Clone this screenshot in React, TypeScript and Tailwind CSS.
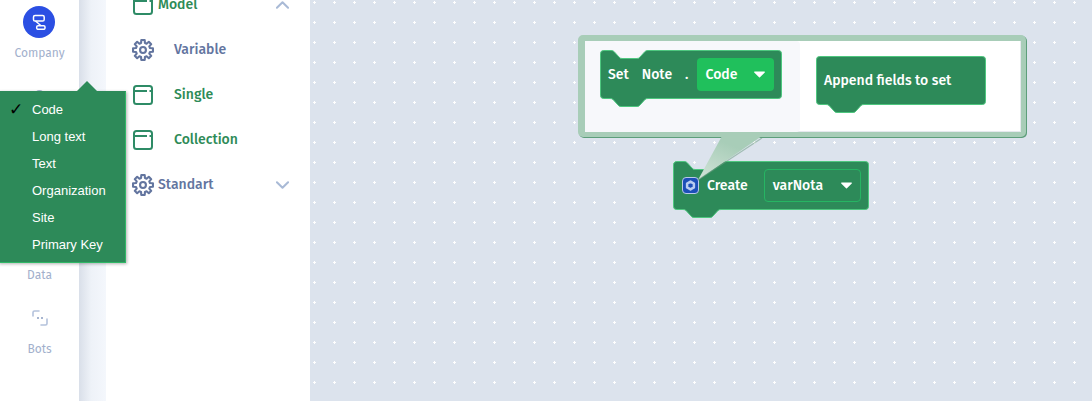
import React from "react";

const FONT = "font-['Fira_Sans','Noto_Sans','Open_Sans',sans-serif]";

/* 8-toothed cog outline, computed so that every tooth is identical */
function gearPath() {
  const pts: string[] = [];
  const teeth = 8;
  for (let i = 0; i < teeth; i++) {
    const c = (i * Math.PI * 2) / teeth - Math.PI / 2;
    const seg: [number, number][] = [
      [-0.27, 7.9],
      [-0.17, 11],
      [0.17, 11],
      [0.27, 7.9],
    ];
    seg.forEach(([d, r]) => {
      const x = 12 + r * Math.cos(c + d);
      const y = 12 + r * Math.sin(c + d);
      pts.push(`${x.toFixed(2)} ${y.toFixed(2)}`);
    });
  }
  return `M${pts.join("L")}z`;
}

function Gear({ className, sw = 2.3 }: { className: string; sw?: number }) {
  return (
    <svg viewBox="0 0 24 24" fill="none" stroke="currentColor" strokeWidth={sw} strokeLinecap="round" strokeLinejoin="round" className={className}>
      <path d={gearPath()} />
      <circle cx="12" cy="12" r="3.2" />
    </svg>
  );
}

function Win({ className }: { className: string }) {
  return (
    <svg viewBox="0 0 20 20" fill="none" stroke="currentColor" strokeWidth="2" className={className}>
      <rect x="1" y="1" width="18" height="18" rx="2.5" />
      <path d="M1 6h13M16.5 6h2.5" />
    </svg>
  );
}

function Caret({ className }: { className: string }) {
  return (
    <svg viewBox="0 0 10 6" className={className} fill="currentColor">
      <path d="M0.6 0.3h8.8a0.5 0.5 0 0 1 0.4 0.8L5.4 5.6a0.6 0.6 0 0 1-0.8 0L0.2 1.1a0.5 0.5 0 0 1 0.4-0.8z" />
    </svg>
  );
}

function Row({ icon, label, color, gap }: { icon: React.ReactNode; label: string; color: string; gap: string }) {
  return (
    <div className={`h-[45px] flex items-center ${gap}`}>
      {icon}
      <span className={`text-[14px] font-medium ${color}`}>{label}</span>
    </div>
  );
}

function blockPath(w: number, h: number, notch: boolean) {
  const r = 3.5;
  const a = r - 0.5;
  const top = notch ? `M${r} 0.5H11q2 0 3 1l5 5.5q1 1.5 3 1.5H37q2 0 3-1.5l5-5.5q1-1 3-1H${w - r}` : `M${r} 0.5H${w - r}`;
  return `${top}a${a} ${a} 0 0 1 ${a} ${a}V${h - r}a${a} ${a} 0 0 1-${a} ${a}H48q-2 0-3 1l-5 5.5q-1 1.5-3 1.5H21q-2 0-3-1.5l-5-5.5q-1-1-3-1H${r}a${a} ${a} 0 0 1-${a}-${a}V${r}a${a} ${a} 0 0 1 ${a}-${a}z`;
}

function BlockShape({ w, h, notch }: { w: number; h: number; notch: boolean }) {
  return (
    <svg width={w} height={h + 9} viewBox={`0 0 ${w} ${h + 9}`} className="absolute inset-0">
      <path d={blockPath(w, h, notch)} fill="#2d8a59" stroke="#4ec77f" strokeWidth="1" />
    </svg>
  );
}

export default function App() {
  return (
    <div className={`w-[1092px] h-[401px] overflow-hidden relative flex ${FONT}`}>
      {/* Icon rail */}
      <aside className="w-[79px] shrink-0 bg-white flex flex-col items-center">
        <div className="mt-[6px] mr-[1px] w-8 h-8 rounded-full bg-[#2b4fe3] flex items-center justify-center">
          <svg viewBox="0 0 16 16" fill="none" stroke="white" strokeWidth="1.5" strokeLinejoin="round" className="w-4 h-4">
            <rect x="2.5" y="1.5" width="10.7" height="5.5" rx="1.6" />
            <rect x="5.7" y="11.7" width="8.3" height="3.6" rx="1.3" />
            <path d="M4.5 7l5.5 4.7" />
          </svg>
        </div>
        <span className="mt-[7px] text-[12px] leading-[16px] text-[#a2b0cc]">Company</span>
        <span className="mt-[29px] w-[7px] h-[4px] rounded-t-[3px] bg-[#aab6cf]" />
        <span className="mt-[173px] text-[12px] leading-[16px] text-[#a2b0cc]">Data</span>
        <svg viewBox="0 0 18 18" fill="none" stroke="#b4c2dc" strokeWidth="1.6" strokeLinecap="round" className="mt-[26px] w-[18px] h-[18px]">
          <path d="M2 7V3.5A1.5 1.5 0 0 1 3.5 2H8" />
          <path d="M16 10v4.5a1.5 1.5 0 0 1-1.5 1.5H10" />
          <circle cx="7" cy="9" r="1" fill="#8a9cc0" stroke="none" />
          <circle cx="11" cy="9" r="1" fill="#8a9cc0" stroke="none" />
        </svg>
        <span className="mt-[14px] text-[12px] leading-[16px] text-[#a2b0cc]">Bots</span>
      </aside>

      {/* Shadow gutter */}
      <div className="w-[27px] shrink-0 bg-[linear-gradient(90deg,#d9dfe9_0%,#eef2f8_45%,#f4f7fc_100%)]" />

      {/* Tree panel */}
      <nav className="w-[204px] shrink-0 bg-white pl-[27px] pr-[20px] -mt-[18px] h-[419px]">
        <div className="h-[45px] flex items-center gap-[5px] relative text-[#2e8b57]">
          <Win className="w-5 h-5 text-[#2e8b66]" />
          <span className="text-[14px] font-medium">Model</span>
          <svg viewBox="0 0 14 8" fill="none" stroke="#a9bad6" strokeWidth="2.2" strokeLinecap="round" strokeLinejoin="round" className="ml-auto mr-[1px] w-[13px] h-2">
            <path d="M1 7l6-6 6 6" />
          </svg>
        </div>
        <Row icon={<Gear className="w-[22px] h-[22px] -mx-[1px] text-[#63759f]" />} label="Variable" color="text-[#63759f]" gap="gap-[21px]" />
        <Row icon={<Win className="w-5 h-5 text-[#2e8b66]" />} label="Single" color="text-[#2e8b57]" gap="gap-[21px]" />
        <Row icon={<Win className="w-5 h-5 text-[#2e8b66]" />} label="Collection" color="text-[#2e8b57]" gap="gap-[21px]" />
        <div className="h-[45px] flex items-center gap-[5px] text-[#63759f]">
          <Gear className="w-[22px] h-[22px] -mx-[1px]" />
          <span className="text-[14px] font-medium">Standart</span>
          <svg viewBox="0 0 14 8" fill="none" stroke="#a9bad6" strokeWidth="2.2" strokeLinecap="round" strokeLinejoin="round" className="ml-auto mr-[1px] w-[13px] h-2">
            <path d="M1 1l6 6 6-6" />
          </svg>
        </div>
      </nav>

      {/* Canvas */}
      <main className="flex-1 relative bg-[#dce3ed] bg-[radial-gradient(circle_at_10.5px_10.5px,#ffffff_1.2px,transparent_1.2px)] bg-[size:20px_20px] bg-[position:-6px_-8px]">
        {/* Comment bubble */}
        <div className="absolute left-[268px] top-[35px] w-[448px] h-[102px] rounded-[5px] border-t-[6px] border-l-[7px] border-r-[5px] border-b-[5px] border-[#a8cdb8] shadow-[1px_1px_0_0_#5d9e7b,inset_-1px_-1px_0_0_#e6e9ee] bg-white">
          <div className="w-[215px] h-full bg-[#f7f8fb] rounded-r-[4px]" />
        </div>

        {/* Set Note . Code */}
        <div className="absolute left-[290px] top-[50px] w-[182px] h-[58px] text-white text-[14px] font-medium">
          <BlockShape w={182} h={49} notch />
          <div className="relative flex items-center h-[49px] pl-[8px]">
            <span>Set</span>
            <span className="ml-[13px]">Note</span>
            <span className="ml-[13px]">.</span>
            <div className="ml-[9px] w-[77px] h-[33px] rounded-[4px] bg-[#20c05c] flex items-center pl-[8px] pr-[9px] justify-between">
              <span>Code</span>
              <Caret className="w-[11px] h-[7px] text-white" />
            </div>
          </div>
        </div>

        {/* Append fields */}
        <div className="absolute left-[506px] top-[56px] w-[170px] h-[58px] text-white text-[14px] font-medium">
          <BlockShape w={170} h={49} notch={false} />
          <div className="relative flex items-center h-[49px] pl-[8px]">
            <span>Append fields to set</span>
          </div>
        </div>

        {/* Create varNota */}
        <div className="absolute left-[363px] top-[161px] w-[196px] h-[58px] text-white text-[14px] font-medium">
          <BlockShape w={196} h={49} notch />
          <div className="relative flex items-center h-[49px] pl-[9px]">
            <span className="w-[17px] h-[17px] rounded-[4px] bg-[#1c4fb8] border border-[#b9c9e8] flex items-center justify-center">
              <svg viewBox="0 0 24 24" className="w-[11px] h-[11px] text-[#b8ccf0]" fill="none" stroke="currentColor" strokeWidth="5.5" strokeLinejoin="round">
                <path d="M12 3.5l7.4 4.25v8.5L12 20.5l-7.4-4.25v-8.5z" />
              </svg>
            </span>
            <span className="ml-[8px]">Create</span>
            <div className="ml-[16px] w-[97px] h-[33px] rounded-[4px] border border-[#26b563] flex items-center pl-[8px] pr-[8px] justify-between">
              <span>varNota</span>
              <Caret className="w-[11px] h-[7px] text-white" />
            </div>
          </div>
        </div>

        {/* Bubble tail, over the block it points at */}
        <svg width="72" height="48" viewBox="0 0 72 48" className="absolute left-[382px] top-[136px]">
          <defs>
            <linearGradient id="tail" x1="0.05" y1="0.95" x2="0.5" y2="0.2">
              <stop offset="0" stopColor="#cfe2d6" />
              <stop offset="1" stopColor="#a8cdb8" />
            </linearGradient>
          </defs>
          <path d="M6 44L30 0h40z" fill="url(#tail)" />
          <path d="M70 2L6 44" stroke="#6f9c83" strokeOpacity="0.55" strokeWidth="1.2" fill="none" />
        </svg>
      </main>

      {/* Dropdown menu */}
      <div className="absolute left-[-2px] top-[91px] w-[128px] h-[172px] bg-[#2d8a59] border border-[#2fb866] border-t-[#2d8a59] shadow-[1px_1px_3px_rgba(0,0,0,0.3)] font-['Liberation_Sans',Arial,sans-serif] text-[13px] text-white pt-[4px]">
        <div className="absolute left-[77px] -top-[11px] w-0 h-0 border-l-[11px] border-r-[11px] border-b-[11px] border-l-transparent border-r-transparent border-b-[#2d8a59]" />
        {[
          ["Code", true],
          ["Long text", false],
          ["Text", false],
          ["Organization", false],
          ["Site", false],
          ["Primary Key", false],
        ].map(([t, c]) => (
          <div key={t as string} className="h-[27px] flex items-center pl-[33px] relative">
            {c ? <span className="absolute left-[10px] text-black text-[17px] leading-none">✓</span> : null}
            <span>{t as string}</span>
          </div>
        ))}
      </div>
    </div>
  );
}
